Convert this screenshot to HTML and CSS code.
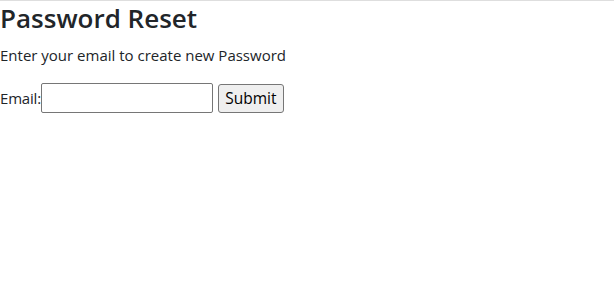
FILE: index.html
```html
<!DOCTYPE html>
<html>
<head>
<meta charset="utf-8">
<link rel="stylesheet" href="styles.css">
</head>
<body>
<div class="topline"></div>
<h1 class="title">Password Reset</h1>
<p class="lead">Enter your email to create new Password</p>
<form class="form">
<label class="label" for="email">Email:</label><input class="input" id="email" type="email"><button class="btn" type="button">Submit</button>
</form>
</body>
</html>
```
FILE: styles.css
```css
html, body {
  margin: 0;
  padding: 0;
  background: #fff;
}
body {
  font-family: "Open Sans", "Noto Sans", sans-serif;
  color: #212529;
  font-size: 15px;
}
.topline {
  height: 1px;
  background: #dedede;
}
.title {
  margin: 0 0 8px 0;
  font-size: 26px;
  line-height: 34px;
  font-weight: 600;
}
.lead {
  margin: 0 0 16px 0;
  line-height: 24px;
}
.form {
  display: flex;
  align-items: center;
}
.label {
  line-height: 24px;
  letter-spacing: -0.2px;
}
.input {
  box-sizing: border-box;
  width: 172px;
  height: 30px;
  border: 1px solid #767676;
  border-radius: 2px;
  margin: 0;
  padding: 1px 2px;
}
.btn {
  box-sizing: border-box;
  margin-left: 5px;
  width: 66px;
  height: 29px;
  border: 1px solid #767676;
  border-radius: 3px;
  background: #efefef;
  color: #000;
  font-family: "Open Sans", "Noto Sans", sans-serif;
  font-size: 15.5px;
  padding: 0;
}
```
